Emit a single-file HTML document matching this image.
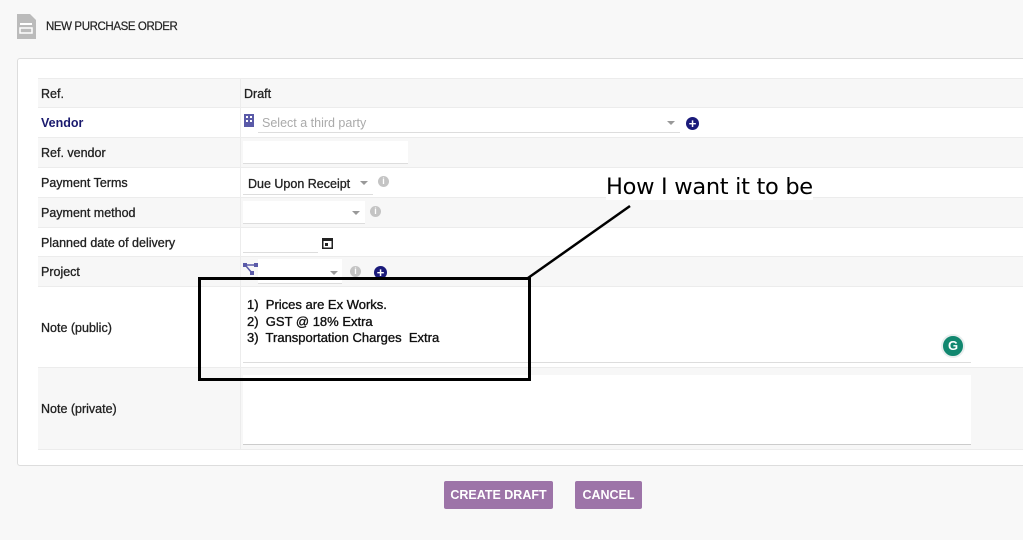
<!DOCTYPE html>
<html><head><meta charset="utf-8"><style>
body{margin:0;width:1023px;height:540px;background:#f8f8f8;font-family:"Liberation Sans",sans-serif;font-size:12.5px;color:#222;position:relative;overflow:hidden}
.a{position:absolute}
.row{position:absolute;left:38px;width:985px;border-top:1px solid #ececec}
.g{background:#f7f7f7}.w{background:#fff}
.lab{position:absolute;left:3px;-webkit-text-stroke:0.3px #222}
.vl{position:absolute;left:202px;top:0;bottom:0;border-left:1px solid #ececec}
.ul{position:absolute;border-bottom:1px solid #ddd}
.info{position:absolute;width:11px;height:11px;border-radius:50%;background:#c4c4c4;color:#fff;font-size:9px;font-weight:bold;text-align:center;line-height:11px}
.plus{position:absolute;width:13px;height:13px;border-radius:50%;background:#1a1a7a;color:#fff;font-size:13px;font-weight:bold;text-align:center;line-height:13px}
.caret{position:absolute;width:0;height:0;border-left:4px solid transparent;border-right:4px solid transparent;border-top:4px solid #999}
.btn{position:absolute;top:481px;height:28px;background:#9d74a8;color:#fff;font-weight:bold;font-size:12.5px;line-height:28px;text-align:center;border-radius:2px}
.s{-webkit-text-stroke:0.3px #222}
</style></head><body>
<svg class="a" style="left:17px;top:14px" width="19" height="25" viewBox="0 0 19 25"><path d="M0 0H13L19 6V25H0Z" fill="#bbb"/><rect x="3" y="9" width="12" height="2" fill="#fff"/><rect x="3" y="14" width="12" height="5" fill="none" stroke="#fff" stroke-width="1.5"/></svg>
<div class="a" style="left:46px;top:21px;font-size:11.5px;color:#222;letter-spacing:-0.4px;-webkit-text-stroke:0.2px #222">NEW PURCHASE ORDER</div>
<div class="a" style="left:17px;top:58px;width:1010px;height:406px;background:#fff;border:1px solid #ddd;border-radius:3px"></div>

<div class="row g" style="top:78px;height:29px"><div class="vl"></div><div class="lab" style="top:8px">Ref.</div><div class="a s" style="left:206px;top:8px">Draft</div></div>
<div class="row w" style="top:107px;height:29px"><div class="vl"></div><div class="lab" style="top:8px;font-weight:bold;color:#1a1a6e;-webkit-text-stroke:0">Vendor</div>
<svg class="a" style="left:206px;top:6px" width="10" height="13"><rect width="10" height="13" fill="#5a5aa8"/><rect x="2" y="2" width="2" height="2" fill="#fff"/><rect x="6" y="2" width="2" height="2" fill="#fff"/><rect x="2" y="6" width="2" height="2" fill="#fff"/><rect x="6" y="6" width="2" height="2" fill="#fff"/></svg>
<div class="a" style="left:224px;top:8px;color:#aaa">Select a third party</div><div class="ul" style="left:220px;width:422px;top:24px"></div><div class="caret" style="left:629px;top:13px"></div><div class="plus" style="left:648px;top:9px">+</div></div>
<div class="row g" style="top:137px;height:29px"><div class="vl"></div><div class="lab" style="top:8px">Ref. vendor</div><div class="a" style="left:205px;top:3px;width:165px;height:22px;background:#fff;border-bottom:1px solid #ddd"></div></div>
<div class="row w" style="top:167px;height:29px"><div class="vl"></div><div class="lab" style="top:8px">Payment Terms</div><div class="a s" style="left:210px;top:9px">Due Upon Receipt</div><div class="ul" style="left:205px;width:130px;top:26px"></div><div class="caret" style="left:322px;top:13px"></div><div class="info" style="left:340px;top:8px">i</div></div>
<div class="row g" style="top:197px;height:29px"><div class="vl"></div><div class="lab" style="top:8px">Payment method</div><div class="a" style="left:205px;top:3px;width:122px;height:22px;background:#fff;border-bottom:1px solid #ddd"></div><div class="caret" style="left:314px;top:13px"></div><div class="info" style="left:332px;top:8px">i</div></div>
<div class="row w" style="top:227px;height:29px"><div class="vl"></div><div class="lab" style="top:8px">Planned date of delivery</div><div class="ul" style="left:205px;width:75px;top:24px"></div>
<svg class="a" style="left:284px;top:9px" width="11" height="12"><rect x="0.75" y="1.75" width="9.5" height="9.5" fill="none" stroke="#222" stroke-width="1.5"/><rect x="0" y="1" width="11" height="3" fill="#222"/><rect x="3" y="6" width="3" height="3" fill="#222"/></svg></div>
<div class="row g" style="top:256px;height:30px"><div class="vl"></div><div class="lab" style="top:8px">Project</div>
<svg class="a" style="left:205px;top:6px" width="16" height="12"><rect x="0" y="0" width="4" height="4" fill="#5a5aa8"/><rect x="11" y="0" width="4" height="4" fill="#5a5aa8"/><rect x="7" y="8" width="4" height="4" fill="#5a5aa8"/><path d="M2 2H13M3 3L9 10" stroke="#5a5aa8" stroke-width="1.5"/></svg>
<div class="a" style="left:220px;top:2px;width:84px;height:24px;background:#fff;border-bottom:1px solid #ddd"></div><div class="caret" style="left:292px;top:14px"></div><div class="info" style="left:312px;top:9px">i</div><div class="plus" style="left:336px;top:9px">+</div></div>
<div class="row w" style="top:286px;height:81px"><div class="vl"></div><div class="lab" style="top:34px">Note (public)</div><div class="ul" style="left:205px;width:728px;top:75px"></div>
<div class="a" style="left:209px;top:10px;line-height:16.5px;color:#111;font-size:13px;-webkit-text-stroke:0.35px #111">1)&nbsp; Prices are Ex Works.<br>2)&nbsp; GST @ 18% Extra<br>3)&nbsp; Transportation Charges&nbsp; Extra</div>
<div class="a" style="left:903px;top:47px;width:20px;height:20px;border-radius:50%;background:#11876f;border:2px solid #e8eeee;color:#fff;font-weight:bold;font-size:13px;text-align:center;line-height:20px">G</div></div>
<div class="row g" style="top:367px;height:81px;border-bottom:1px solid #ececec"><div class="vl"></div><div class="lab" style="top:34px">Note (private)</div><div class="a" style="left:205px;top:7px;width:728px;height:69px;background:#fff;border-bottom:1px solid #ccc"></div></div>

<div class="btn" style="left:444px;width:109px">CREATE DRAFT</div>
<div class="btn" style="left:575px;width:67px">CANCEL</div>

<div class="a" style="left:198px;top:277px;width:327px;height:98px;border:3px solid #000"></div>
<svg class="a" style="left:0;top:0" width="1023" height="540"><line x1="528" y1="278" x2="630" y2="206" stroke="#000" stroke-width="2.5"/></svg>
<div class="a" style="left:606px;top:174px;font-size:22.5px;font-family:'DejaVu Sans',sans-serif;background:#fff;color:#000;letter-spacing:-0.3px;line-height:26px">How I want it to be</div>
</body></html>
